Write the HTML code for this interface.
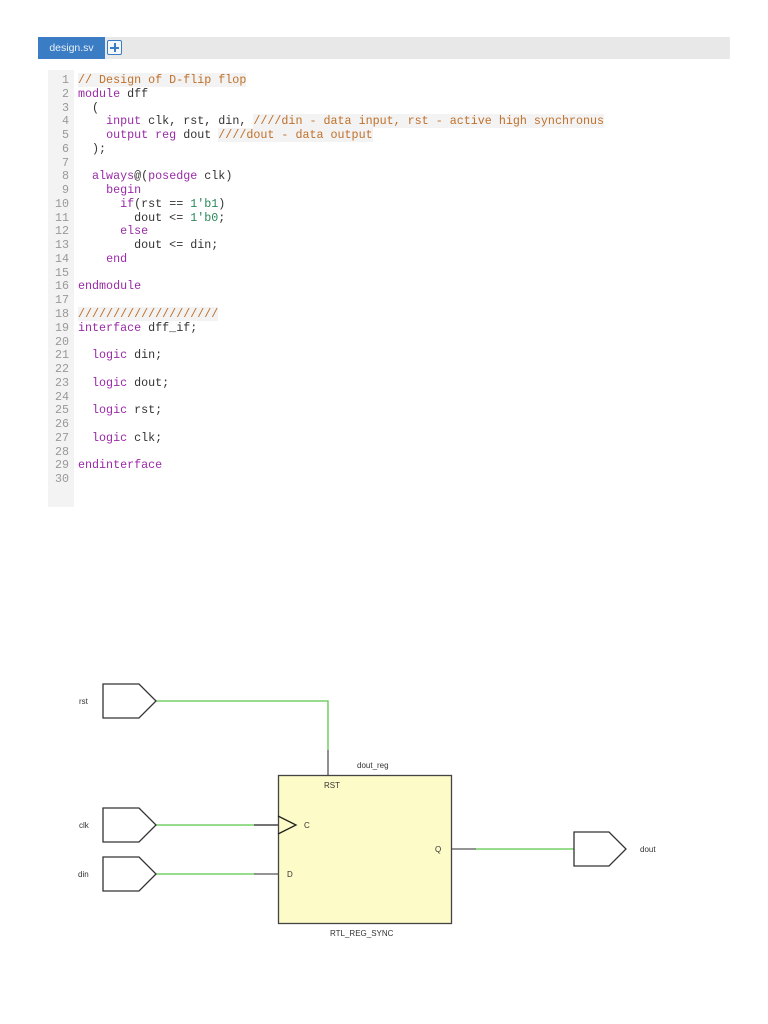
<!DOCTYPE html>
<html><head><meta charset="utf-8"><style>
body{margin:0;width:768px;height:1024px;background:#fff;position:relative;overflow:hidden;font-family:"Liberation Sans",sans-serif}
.bar{position:absolute;left:38px;top:37px;width:692px;height:22px;background:#e8e8e8}
.tab{position:absolute;left:38px;top:37px;width:67px;height:22px;background:#3a7dc4;color:#e8f0fa;font-size:10.5px;line-height:22px;text-align:center}
.plus{position:absolute;left:107px;top:40px;width:13px;height:13px;border:1.5px solid #3a7dc4;border-radius:2px;background:#f4f8fc}
.plus:before{content:"";position:absolute;left:2px;top:5.5px;width:9px;height:2px;background:#3a7dc4}
.plus:after{content:"";position:absolute;left:5.5px;top:2px;width:2px;height:9px;background:#3a7dc4}
.gut{position:absolute;left:48px;top:70px;width:26px;height:437px;background:#f3f3f3}
pre{margin:0;position:absolute;top:74px;font-family:"Liberation Mono",monospace;font-size:11.7px;line-height:13.76px}
.ln{left:48px;width:21px;text-align:right;color:#999}
.code{left:78px;color:#333}
.k{color:#9a2aa8}.c{color:#c0702a;background:#f3f3f3}.n{color:#2a8a5a}
svg{position:absolute;left:0;top:0}
svg text{font-family:"Liberation Sans",sans-serif;font-size:8px;fill:#333}
</style></head><body>
<div class="bar"></div><div class="tab">design.sv</div><div class="plus"></div>
<div class="gut"></div>
<pre class="ln">1
2
3
4
5
6
7
8
9
10
11
12
13
14
15
16
17
18
19
20
21
22
23
24
25
26
27
28
29
30</pre>
<pre class="code"><span class="c">// Design of D-flip flop</span>
<span class="k">module</span> dff
  (
    <span class="k">input</span> clk, rst, din, <span class="c">////din - data input, rst - active high synchronus</span>
    <span class="k">output reg</span> dout <span class="c">////dout - data output</span>
  );

  <span class="k">always</span>@(<span class="k">posedge</span> clk)
    <span class="k">begin</span>
      <span class="k">if</span>(rst == <span class="n">1'b1</span>)
        dout &lt;= <span class="n">1'b0</span>;
      <span class="k">else</span>
        dout &lt;= din;
    <span class="k">end</span>

<span class="k">endmodule</span>

<span class="c">////////////////////</span>
<span class="k">interface</span> dff_if;

  <span class="k">logic</span> din;

  <span class="k">logic</span> dout;

  <span class="k">logic</span> rst;

  <span class="k">logic</span> clk;

<span class="k">endinterface</span>
</pre>
<svg width="768" height="1024">
<g fill="none" stroke-width="1.3">
<polyline points="156,701 328,701 328,750" stroke="#5ac84a"/>
<line x1="328" y1="750" x2="328" y2="775" stroke="#555"/>
<line x1="156" y1="825" x2="254" y2="825" stroke="#5ac84a"/>
<line x1="254" y1="825" x2="278" y2="825" stroke="#222"/>
<line x1="156" y1="874" x2="254" y2="874" stroke="#5ac84a"/>
<line x1="254" y1="874" x2="278" y2="874" stroke="#555"/>
<line x1="452" y1="849" x2="476" y2="849" stroke="#555"/>
<line x1="476" y1="849" x2="574" y2="849" stroke="#5ac84a"/>
<rect x="278.5" y="775.5" width="173" height="148" fill="#fdfbc8" stroke="#444"/>
<polyline points="278,816 296,825 278,834" stroke="#222"/>
<path d="M103,684 H139 L156,701 L139,718 H103 Z" stroke="#333" fill="#fff"/>
<path d="M103,808 H139 L156,825 L139,842 H103 Z" stroke="#333" fill="#fff"/>
<path d="M103,857 H139 L156,874 L139,891 H103 Z" stroke="#333" fill="#fff"/>
<path d="M574,832 H609 L626,849 L609,866 H574 Z" stroke="#333" fill="#fff"/>
</g>
<text x="79" y="704">rst</text><text x="79" y="828">clk</text><text x="78" y="877">din</text>
<text x="640" y="852">dout</text>
<text x="357" y="768">dout_reg</text>
<text x="324" y="788">RST</text>
<text x="304" y="828">C</text>
<text x="287" y="877">D</text>
<text x="435" y="852">Q</text>
<text x="330" y="936">RTL_REG_SYNC</text>
</svg>
</body></html>
